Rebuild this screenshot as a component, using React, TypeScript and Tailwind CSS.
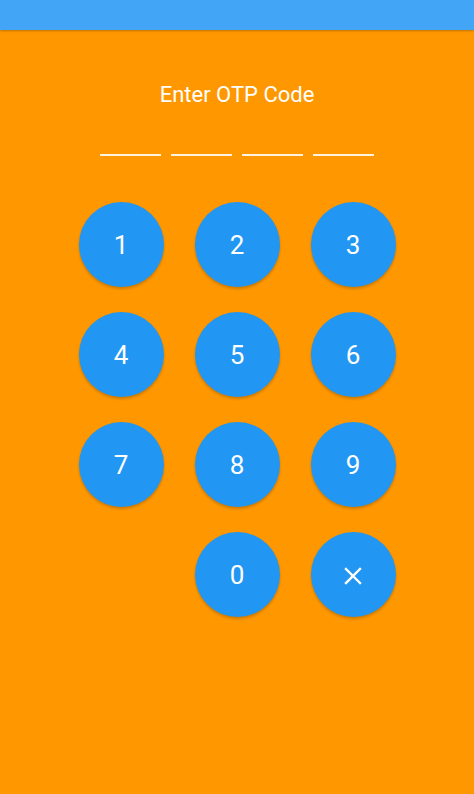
import React from 'react';

const keys = ['1', '2', '3', '4', '5', '6', '7', '8', '9', '', '0', 'x'];

const App: React.FC = () => {
  return (
    <div className="w-[474px] h-[794px] bg-[#ff9800] flex flex-col" style={{ fontFamily: 'Roboto, "Noto Sans", sans-serif' }}>
      <div className="h-[30px] bg-[#42a5f5] shadow-[0_1px_2px_rgba(0,0,0,0.25)]" />

      <div className="mt-[51px] h-[28px] flex items-center justify-center text-white text-[22px] leading-[28px]">
        Enter OTP Code
      </div>

      {/* code slots */}
      <div className="mt-[45px] flex justify-center gap-[10px]">
        {[0, 1, 2, 3].map(i => (
          <div key={i} className="w-[61px] h-[2px] bg-[#fff3e0]" />
        ))}
      </div>

      {/* keypad */}
      <div className="mt-[46px] mx-auto grid grid-cols-[85px_85px_85px] gap-x-[31px] gap-y-[25px]">
        {keys.map((k, i) =>
          k === '' ? (
            <div key={i} className="w-[85px] h-[85px]" />
          ) : (
            <div
              key={i}
              className="w-[85px] h-[85px] rounded-full bg-[#2196f3] shadow-[0_2px_3px_rgba(0,0,0,0.2)] flex items-center justify-center text-white text-[26px] pt-[2px]"
            >
              {k === 'x' ? (
                <svg width="18" height="18" viewBox="0 0 18 18">
                  <path d="M2 2L16 16M16 2L2 16" stroke="white" strokeWidth="2.4" strokeLinecap="square" />
                </svg>
              ) : (
                k
              )}
            </div>
          )
        )}
      </div>
    </div>
  );
};

export default App;
